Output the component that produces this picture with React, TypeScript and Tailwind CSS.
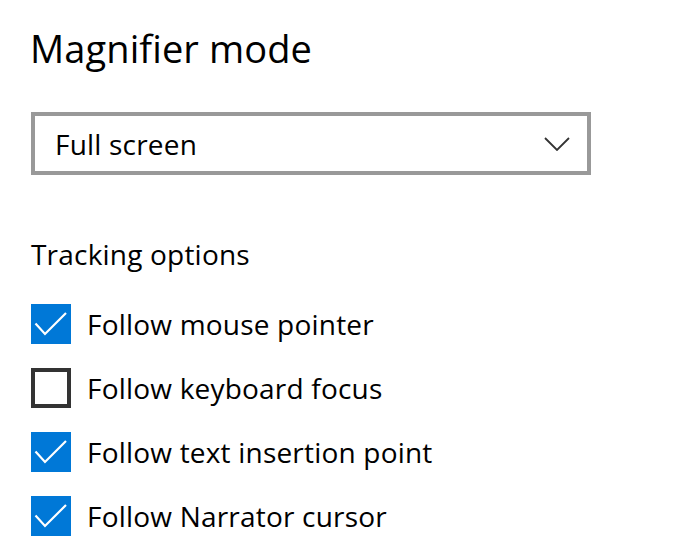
import React from 'react';

const font = { fontFamily: '"Open Sans", "Noto Sans", sans-serif' };

interface CheckRowProps {
  label: string;
  checked: boolean;
}

const CheckRow = ({ label, checked }: CheckRowProps) => (
  <div className="flex items-center h-10">
    {checked ? (
      <div className="w-10 h-10 bg-[#0078d7] flex items-center justify-center shrink-0">
        <svg width="40" height="40" viewBox="0 0 40 40">
          <polyline points="4.5,19.5 14,30 35,9" fill="none" stroke="white" strokeWidth="2.2" />
        </svg>
      </div>
    ) : (
      <div className="w-10 h-10 border-4 border-[#333333] bg-white shrink-0" />
    )}
    <span className="ml-[16px] text-[28px] text-black tracking-[0.2px] leading-none">{label}</span>
  </div>
);

const App = () => {
  const options = [
    { label: 'Follow mouse pointer', checked: true },
    { label: 'Follow keyboard focus', checked: false },
    { label: 'Follow text insertion point', checked: true },
    { label: 'Follow Narrator cursor', checked: true },
  ];

  return (
    <div className="w-[680px] h-[557px] bg-white overflow-hidden pl-[31px]" style={font}>
      <h1 className="text-[38px] leading-none text-black pt-[29px] font-normal tracking-[0.1px] -ml-[1px]">Magnifier mode</h1>

      <div className="mt-[45px] w-[560px] h-[63px] border-4 border-[#999999] flex items-center justify-between pl-[20px] pr-[17px]">
        <span className="text-[28px] text-black leading-none tracking-[0.2px]">Full screen</span>
        <svg width="26" height="14" viewBox="0 0 26 14">
          <polyline points="1,1 13,13 25,1" fill="none" stroke="#333333" strokeWidth="1.8" />
        </svg>
      </div>

      <h2 className="mt-[65px] text-[28px] leading-none text-black font-normal tracking-[0.2px]">Tracking options</h2>

      <div className="mt-[36px] flex flex-col gap-6">
        {options.map((o) => (
          <CheckRow key={o.label} label={o.label} checked={o.checked} />
        ))}
      </div>
    </div>
  );
};

export default App;
